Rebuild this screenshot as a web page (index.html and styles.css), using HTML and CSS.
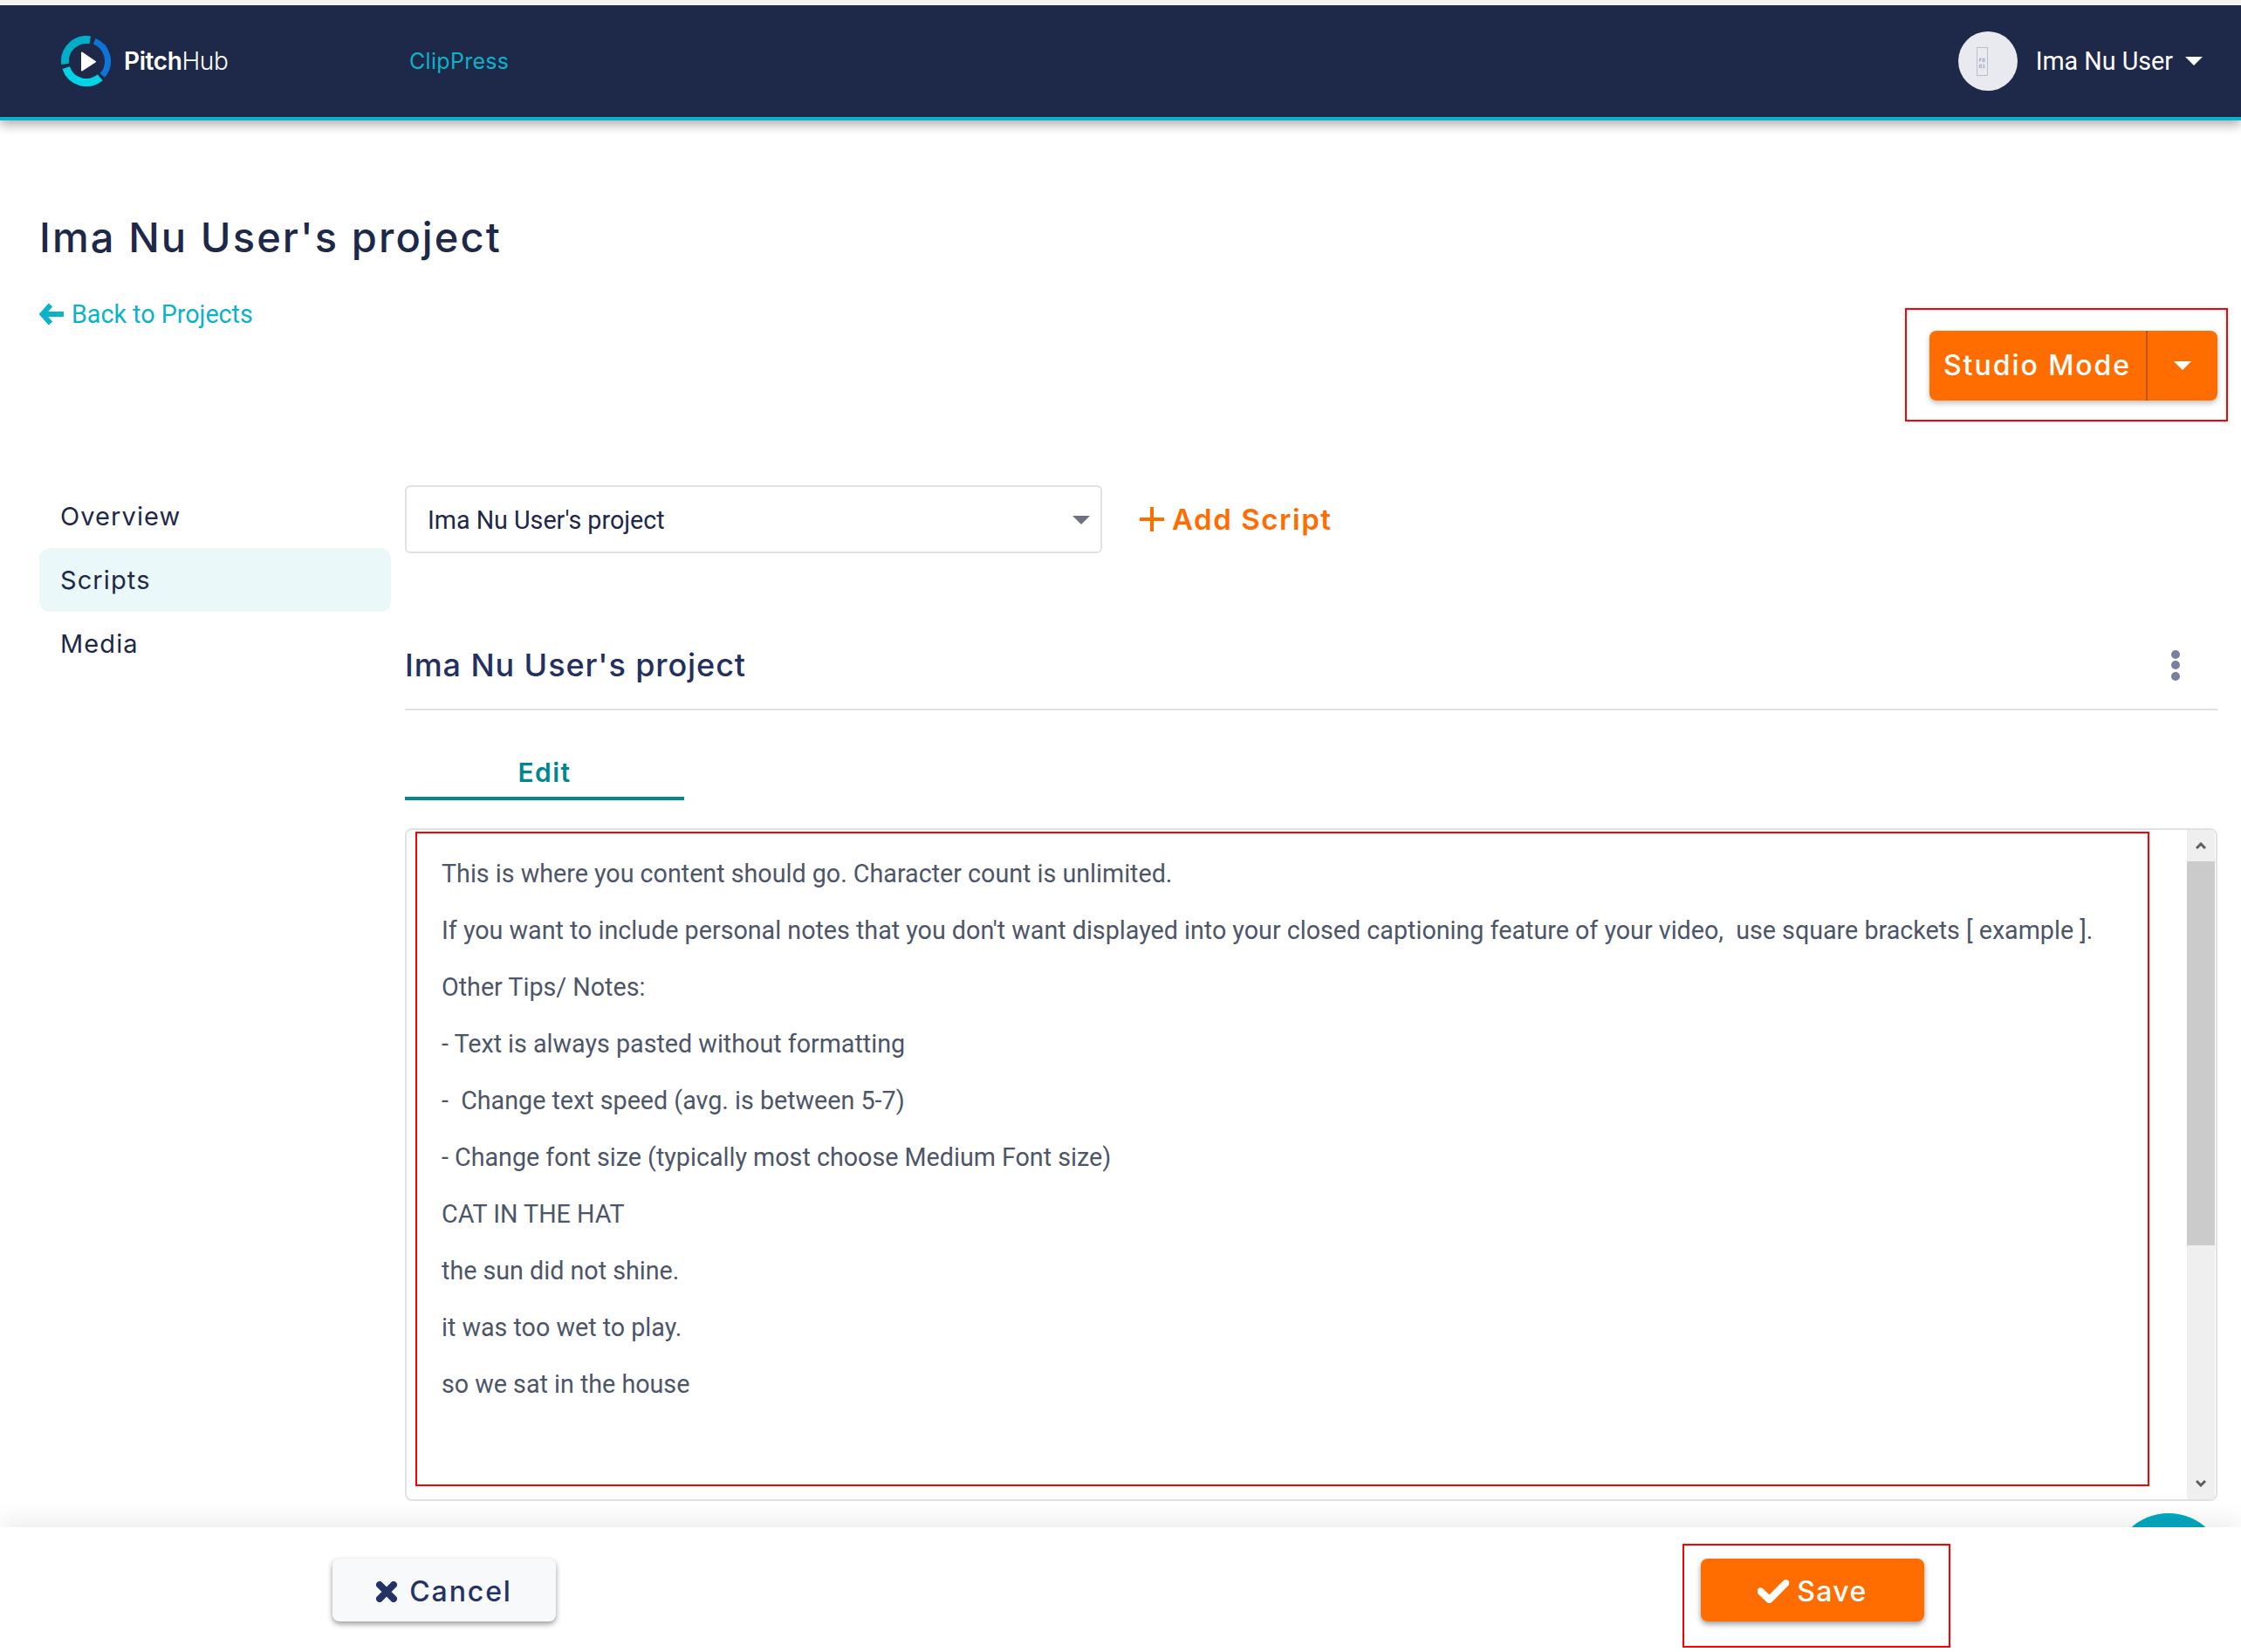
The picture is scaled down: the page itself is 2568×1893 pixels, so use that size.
FILE: index.html
```html
<!DOCTYPE html>
<html lang="en">
<head>
<meta charset="utf-8">
<title>Ima Nu User's project</title>
<link rel="stylesheet" href="styles.css">
</head>
<body>
<div class="page">
  <header class="topbar">
    <div class="brand">
      <svg class="logo" viewBox="0 0 58 58" width="58" height="58" aria-hidden="true">
        <path class="arc-teal" d="M33.25 4.87A24.5 24.5 0 0 0 4.74 32.41"/>
        <path class="arc-blue" d="M38.18 6.29A24.5 24.5 0 0 1 47.2 45.39"/>
        <path class="arc-cyan" d="M5.7 36.57A24.5 24.5 0 0 0 44.75 47.77"/>
        <path class="play" d="M23 19.5v20a1 1 0 0 0 1.5.8L39.5 30.6a1 1 0 0 0 0-1.7L24.5 18.7a1 1 0 0 0-1.5.8z"/>
      </svg>
      <span class="wordmark"><b>Pitch</b>Hub</span>
    </div>
    <a class="navlink">ClipPress</a>
    <div class="user">
      <span class="avatar"><span class="tofu">F0<br>01</span></span>
      <span class="username">Ima Nu User</span>
      <span class="caret caret-white"></span>
    </div>
  </header>

  <main class="main">
    <section class="head">
      <div>
        <h1 class="title">Ima Nu User's project</h1>
        <a class="back">
          <svg viewBox="0 0 28 26" width="28" height="26" aria-hidden="true"><path d="M13 2.500 3.500 13 13 23.500M4 13h24"/></svg>
          <span>Back to Projects</span>
        </a>
      </div>
      <div class="studio">
        <span class="studio-label">Studio Mode</span>
        <span class="studio-drop"><span class="caret caret-white"></span></span>
      </div>
    </section>

    <div class="body">
      <nav class="side">
        <a class="side-item">Overview</a>
        <a class="side-item active">Scripts</a>
        <a class="side-item">Media</a>
      </nav>
      <section class="content">
        <div class="select-row">
          <div class="select"><span>Ima Nu User's project</span><span class="caret caret-grey"></span></div>
          <a class="add">
            <svg viewBox="0 0 30 30" width="30" height="30" aria-hidden="true"><path d="M15 1v28M1 15h28"/></svg>
            <span>Add Script</span>
          </a>
        </div>
        <div class="script-head">
          <h2 class="script-title">Ima Nu User's project</h2>
          <span class="dots"><i></i><i></i><i></i></span>
        </div>
        <div class="tabs"><a class="tab">Edit</a></div>
        <div class="editor">
          <div class="editor-text">
            <p>This is where you content should go. Character count is unlimited.</p>
            <p>If you want to include personal notes that you don't want displayed into your closed captioning feature of your video,&nbsp; use square brackets [ example ].</p>
            <p>Other Tips/ Notes:</p>
            <p>- Text is always pasted without formatting</p>
            <p>-&nbsp; Change text speed (avg. is between 5-7)</p>
            <p>- Change font size (typically most choose Medium Font size)</p>
            <p>CAT IN THE HAT</p>
            <p>the sun did not shine.</p>
            <p>it was too wet to play.</p>
            <p>so we sat in the house</p>
          </div>
          <div class="scrollbar">
            <span class="scroll-btn"><svg viewBox="0 0 12 8" width="12" height="8" aria-hidden="true"><path d="M1 7 6 2l5 5"/></svg></span>
            <span class="scroll-thumb"></span>
            <span class="scroll-track"></span>
            <span class="scroll-btn"><svg viewBox="0 0 12 8" width="12" height="8" aria-hidden="true"><path d="M1 1l5 5 5-5"/></svg></span>
          </div>
        </div>
      </section>
    </div>
    <span class="chat-bubble"></span>
  </main>

  <footer class="footer">
    <button class="btn btn-cancel">
      <svg viewBox="0 0 24 24" width="24" height="24" aria-hidden="true"><path d="M4 4l16 16M20 4 4 20"/></svg>
      <span>Cancel</span>
    </button>
    <button class="btn btn-save">
      <svg viewBox="0 0 36 27" width="36" height="27" aria-hidden="true"><path d="M3.5 13.5 13.5 23 32.500 4"/></svg>
      <span>Save</span>
    </button>
  </footer>

  <span class="mark mark-studio"></span>
  <span class="mark mark-editor"></span>
  <span class="mark mark-save"></span>
</div>
</body>
</html>
```

FILE: styles.css
```css
* { box-sizing: border-box; }
html, body { margin: 0; padding: 0; background: #fff; }
body { font-family: Roboto, "Liberation Sans", sans-serif; color: #1e2849; }
a { text-decoration: none; }

.page {
  position: relative;
  width: 2568px;
  height: 1893px;
  display: flex;
  flex-direction: column;
  overflow: hidden;
}

/* top bar */
.topbar {
  position: relative;
  z-index: 3;
  flex: none;
  height: 138px;
  display: flex;
  align-items: center;
  padding-left: 70px;
  background: #1e2849;
  border-top: 6px solid #f3f3f3;
  border-bottom: 4px solid #0cb2c8;
  box-shadow: 0 5px 12px rgba(0, 0, 0, .32);
}
.brand { display: flex; align-items: center; width: 399px; }
.logo { flex: none; display: block; }
.logo path { fill: none; stroke-width: 9; }
.logo .arc-teal { stroke: #00aec7; }
.logo .arc-blue { stroke: #0f74d8; stroke-width: 7; }
.logo .arc-cyan { stroke: #00d3e6; }
.logo .play { fill: #fff; stroke: none; }
.wordmark {
  margin-left: 14px;
  font-family: Inter, sans-serif;
  font-size: 28px;
  font-weight: 300;
  letter-spacing: -.4px;
  color: #fff;
}
.wordmark b { font-weight: 600; }
.navlink {
  font-family: Inter, sans-serif;
  font-size: 25px;
  font-weight: 400;
  letter-spacing: .3px;
  color: #0cb2c8;
}
.user { display: flex; align-items: center; margin-left: auto; padding-right: 44px; }
.avatar {
  width: 68px;
  height: 68px;
  border-radius: 50%;
  background: #e9eaf0;
  display: flex;
  align-items: center;
  padding-left: 21px;
}
.tofu {
  width: 13px;
  height: 33px;
  border: 1px solid #b9bdd0;
  font-family: "DejaVu Sans Mono", monospace;
  font-size: 6px;
  line-height: 7px;
  padding-top: 10px;
  text-align: center;
  color: #7f86a3;
}
.username { margin-left: 21px; font-size: 28.68px; color: #fff; }
.caret {
  display: inline-block;
  width: 0;
  height: 0;
  border-left: 10px solid transparent;
  border-right: 10px solid transparent;
  border-top: 10px solid #fff;
}
.user .caret { margin-left: 14px; }
.caret-grey { border-top-color: #6c7280; }

/* main */
.main { position: relative; flex: 1; min-height: 0; padding: 0 27px 0 45px; }
.head { height: 417px; display: flex; justify-content: space-between; }
.title {
  margin: 104px 0 0;
  font-family: Inter, sans-serif;
  font-size: 47px;
  line-height: 60px;
  font-weight: 500;
  letter-spacing: 2.1px;
  color: #1e2849;
}
.back {
  display: flex;
  align-items: center;
  gap: 9px;
  margin-top: 38px;
  height: 40px;
  font-size: 28.68px;
  color: #0cb2c8;
}
.back svg path { fill: none; stroke: #0cb2c8; stroke-width: 6; }
.studio {
  display: flex;
  align-items: stretch;
  width: 330px;
  height: 80px;
  margin-top: 241px;
  border-radius: 8px;
  background: #ff6d00;
  color: #fff;
  box-shadow: 0 3px 6px rgba(0, 0, 0, .25);
}
.studio-label {
  width: 248px;
  padding-left: 16px;
  line-height: 80px;
  font-family: Inter, sans-serif;
  font-size: 32px;
  font-weight: 500;
  letter-spacing: 1.95px;
  white-space: nowrap;
}
.studio-drop {
  flex: 1;
  display: flex;
  align-items: center;
  justify-content: center;
  border-left: 2px solid #bf5200;
}

.body { display: flex; gap: 16px; }
.side { flex: none; width: 403px; display: flex; flex-direction: column; }
.side-item {
  height: 73px;
  padding-left: 24px;
  border-radius: 12px;
  line-height: 73px;
  font-family: Inter, sans-serif;
  font-size: 29px;
  letter-spacing: 1.1px;
  color: #1e2849;
}
.side-item.active { background: #eaf8fa; }

.content { flex: 1; min-width: 0; }
.select-row { display: flex; align-items: center; margin-top: 1px; }
.select {
  width: 799px;
  height: 78px;
  display: flex;
  align-items: center;
  justify-content: space-between;
  padding: 2px 12px 0 24px;
  border: 2px solid #dee2e6;
  border-radius: 6px;
  font-size: 28.68px;
  color: #1e2849;
}
.add {
  display: flex;
  align-items: center;
  gap: 8px;
  margin-left: 42px;
  font-family: Inter, sans-serif;
  font-size: 33px;
  font-weight: 600;
  letter-spacing: 1.55px;
  color: #ff6d00;
}
.add svg path { fill: none; stroke: #ff6d00; stroke-width: 4; }
.script-head {
  height: 100px;
  margin-top: 80px;
  display: flex;
  align-items: center;
  justify-content: space-between;
  padding: 0 43px 2px 0;
  border-bottom: 2px solid #dee2e6;
}
.script-title {
  margin: 0;
  font-family: Inter, sans-serif;
  font-size: 36px;
  font-weight: 500;
  letter-spacing: .9px;
  color: #243060;
}
.dots { display: flex; flex-direction: column; gap: 2.500px; }
.dots i { width: 10px; height: 10px; border-radius: 50%; background: #7a80a0; }
.tabs { margin-top: 39px; display: flex; }
.tab {
  width: 320px;
  height: 64px;
  padding-top: 4px;
  line-height: 57px;
  text-align: center;
  border-bottom: 4px solid #00878f;
  font-family: Inter, sans-serif;
  font-size: 30px;
  font-weight: 600;
  letter-spacing: 1.45px;
  color: #00878f;
}
.editor {
  margin-top: 32px;
  height: 771px;
  display: flex;
  border: 2px solid #dee2e6;
  border-radius: 8px;
}
.editor-text { flex: 1; min-width: 0; padding: 18px 0 0 40px; }
.editor-text p {
  margin: 0;
  height: 65px;
  line-height: 65px;
  font-size: 28.68px;
  color: #4d5669;
  white-space: nowrap;
}
.scrollbar {
  flex: none;
  width: 32px;
  margin-right: 1px;
  display: flex;
  flex-direction: column;
  background: #efefef;
}
.scroll-btn { flex: none; height: 36px; display: flex; align-items: center; justify-content: center; }
.scroll-btn svg path { fill: none; stroke: #5f5f5f; stroke-width: 3; }
.scroll-thumb { flex: none; height: 440px; background: #cbcbcb; }
.scroll-track { flex: 1; }
.chat-bubble {
  position: absolute;
  left: 2421px;
  top: 1596px;
  width: 128px;
  height: 128px;
  border-radius: 50%;
  background: #00a8c0;
}

/* footer */
.footer {
  position: relative;
  z-index: 2;
  flex: none;
  height: 143px;
  display: flex;
  align-items: flex-start;
  gap: 1312px;
  padding: 36px 0 0 381px;
  background: #fff;
  box-shadow: 0 -5px 28px rgba(0, 0, 0, .09);
}
.btn {
  width: 256px;
  height: 72px;
  padding: 3px 0 0;
  display: flex;
  align-items: center;
  justify-content: center;
  border: 0;
  border-radius: 8px;
  font-family: Inter, sans-serif;
  font-size: 32px;
  font-weight: 500;
  letter-spacing: 1.35px;
  box-shadow: 0 3px 6px rgba(0, 0, 0, .4);
}
.btn-cancel { gap: 14px; letter-spacing: 1.9px; background: #f8f9fb; color: #233366; }
.btn-cancel svg path { fill: none; stroke: #233366; stroke-width: 8; stroke-linecap: round; }
.btn-save { gap: 9px; background: #ff6d00; color: #fff; }
.btn-save svg path { fill: none; stroke: #fff; stroke-width: 8; stroke-linecap: round; stroke-linejoin: round; }

/* red review annotations */
.mark { position: absolute; z-index: 5; border: 2px solid #ff0000; pointer-events: none; }
.mark-studio { left: 2183px; top: 353px; width: 370px; height: 130px; }
.mark-editor { left: 476px; top: 953px; width: 1987px; height: 750px; }
.mark-save { left: 1928px; top: 1769px; width: 307px; height: 119px; }
```
